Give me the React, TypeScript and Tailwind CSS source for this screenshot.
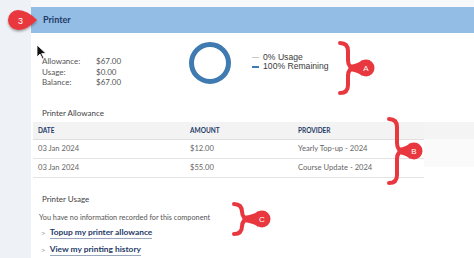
import React from "react";

const RED = "#e8373e";

const Brace = ({ x, y, h, cx, letter }: { x: number; y: number; h: number; cx: number; letter: string }) => {
  const mid = h / 2;
  const w = cx + 12;
  return (
    <svg className="absolute" style={{ left: x, top: y }} width={w} height={h + 4} viewBox={`0 0 ${w} ${h + 4}`}>
      <path
        d={`M2,3 Q10,3 10,11 L10,${mid - 6} Q10,${mid + 2} 17,${mid + 2} Q10,${mid + 2} 10,${mid + 10} L10,${h - 7} Q10,${h + 1} 2,${h + 1}`}
        fill="none"
        stroke={RED}
        strokeWidth={4}
        strokeLinecap="round"
        strokeLinejoin="round"
      />
      <path d={`M12,${mid - 1} Q${cx - 6},${mid - 3} ${cx - 4},${mid - 6} L${cx - 4},${mid + 10} Q${cx - 6},${mid + 7} 12,${mid + 5} Z`} fill={RED} />
      <circle cx={cx} cy={mid + 2} r={8.5} fill={RED} />
      <text x={cx} y={mid + 5} textAnchor="middle" fontSize="8" fill="white" fontFamily="Liberation Sans, sans-serif">
        {letter}
      </text>
    </svg>
  );
};

const rows = [
  { date: "03 Jan 2024", amount: "$12.00", provider: "Yearly Top-up - 2024" },
  { date: "03 Jan 2024", amount: "$55.00", provider: "Course Update - 2024" },
];

export default function App() {
  return (
    <div className="relative w-[474px] h-[258px] overflow-hidden flex bg-[#f6f8fb]" style={{ fontFamily: "Lato, 'Open Sans', sans-serif" }}>
      <div className="w-[31px] shrink-0 bg-[#eef1f6]"></div>
      <div className="flex-1 pt-[7px] flex flex-col">
        <div className="h-[26px] bg-[#93bde4] flex items-center pl-[12px] text-[9px] font-bold text-[#1e3b68]">Printer</div>
        <div className="flex-1 bg-white flex flex-col">
          {/* summary */}
          <div className="flex items-start pt-[8px] h-[75px]">
            <div className="mt-[15px] ml-[11px] text-[8px] leading-[10.5px] text-[#555]">
              <div className="flex"><span className="w-[54px]">Allowance:</span><span>$67.00</span></div>
              <div className="flex"><span className="w-[54px]">Usage:</span><span>$0.00</span></div>
              <div className="flex"><span className="w-[54px]">Balance:</span><span>$67.00</span></div>
            </div>
            <svg className="ml-[67px]" width="44" height="44" viewBox="0 0 44 44">
              <circle cx="22" cy="22" r="18.5" fill="none" stroke="#3f7ab0" strokeWidth="5" />
            </svg>
            <div className="ml-[20px] mt-[12px] text-[8.6px] leading-[9px] font-normal text-[#3a3a3a]" style={{ fontFamily: "'Liberation Sans', Arial, sans-serif" }}>
              <div className="flex items-center gap-[4px]"><span className="w-[7px] h-[1px] bg-[#c8c8c8]"></span>0% Usage</div>
              <div className="flex items-center gap-[4px]"><span className="w-[7px] h-[2px] bg-[#3f7ab0]"></span>100% Remaining</div>
            </div>
          </div>
          {/* allowance table */}
          <div className="pl-[11px] text-[8px] text-[#444] h-[14px] leading-[10px]">Printer Allowance</div>
          <div className="flex">
            <div className="ml-[2px] w-[391px] text-[7.6px] text-[#666]">
              <div className="flex h-[18px] items-center bg-[#f3f3f3] border-b border-[#e0e0e0] font-bold text-[#1e3b68] text-[6.5px]">
                <span className="pl-[5px] w-[157px]">DATE</span>
                <span className="w-[108px]">AMOUNT</span>
                <span>PROVIDER</span>
              </div>
              {rows.map((r, i) => (
                <div key={i} className="flex h-[19px] items-center border-b border-[#e3e3e3]">
                  <span className="pl-[5px] w-[157px]">{r.date}</span>
                  <span className="w-[108px]">{r.amount}</span>
                  <span>{r.provider}</span>
                </div>
              ))}
            </div>
            <div className="flex-1 flex flex-col">
              <div className="h-[17px] bg-[#f4f4f4]"></div>
              <div className="h-[28px] bg-[#fafafa]"></div>
            </div>
          </div>
          {/* usage */}
          <div className="pl-[11px] mt-[16px] text-[8px] text-[#444] leading-[10px]">Printer Usage</div>
          <div className="pl-[8px] mt-[9px] text-[7.3px] text-[#555] leading-[10px]">You have no information recorded for this component</div>
          <div className="pl-[10px] mt-[4px] flex flex-col gap-[5px] text-[8.4px] leading-[11px]">
            <div className="flex items-center gap-[4px]">
              <span className="text-[#999] text-[8px]">&gt;</span>
              <span className="font-bold text-[#1e3b68] border-b border-[#9aa8bd]">Topup my printer allowance</span>
            </div>
            <div className="flex items-center gap-[4px]">
              <span className="text-[#999] text-[8px]">&gt;</span>
              <span className="font-bold text-[#1e3b68] border-b border-[#9aa8bd]">View my printing history</span>
            </div>
          </div>
        </div>
      </div>

      {/* overlays */}
      <svg className="absolute left-[4px] top-[8px]" width="38" height="26" viewBox="0 0 38 26">
        <defs>
          <filter id="sh" x="-20%" y="-20%" width="140%" height="160%">
            <feDropShadow dx="0" dy="1.5" stdDeviation="1.2" floodColor="#000" floodOpacity="0.35" />
          </filter>
        </defs>
        <path d="M14,2 Q23,2 33,12 Q23,22 14,22 A10,10 0 0 1 14,2 Z" fill={RED} filter="url(#sh)" />
        <text x="16.5" y="15.5" textAnchor="middle" fontSize="9" fill="white" fontFamily="Liberation Sans, sans-serif">3</text>
      </svg>
      <svg className="absolute left-[36px] top-[44px]" width="12" height="16" viewBox="0 0 12 16">
        <path d="M1,1 L1,13 L4,10 L6.5,15 L8,14.3 L5.7,9.5 L10,9.5 Z" fill="#111" stroke="#fff" strokeWidth="0.8" />
      </svg>
      <Brace x={338} y={40} h={52} cx={28} letter="A" />
      <Brace x={387} y={116} h={66} cx={27} letter="B" />
      <Brace x={232} y={201} h={32} cx={30} letter="C" />
    </div>
  );
}
